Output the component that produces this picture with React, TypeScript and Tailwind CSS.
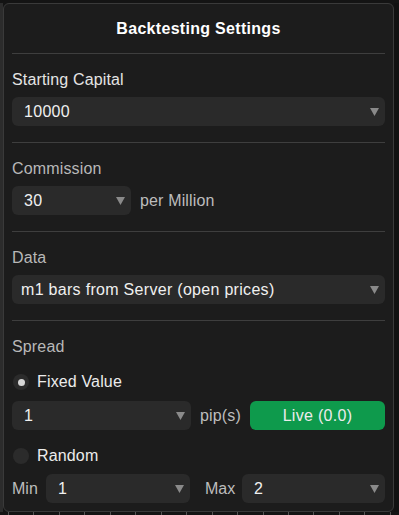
import React from 'react'

const font = { fontFamily: '"Liberation Sans", Arial, sans-serif' }

const Caret: React.FC = () => (
  <svg width="9" height="8" viewBox="0 0 9 8" className="flex-shrink-0">
    <path d="M0 0 L9 0 L4.5 8 Z" fill="#8a8a8a" />
  </svg>
)

const Select: React.FC<{ value: string; className?: string }> = ({ value, className = '' }) => (
  <div className={`h-[29px] flex items-center justify-between pl-3 pr-[6px] bg-[#2a2a2a] rounded-md text-[16px] tracking-[0.3px] text-[#f0f0f0] ${className}`}>
    <span className="truncate">{value}</span>
    <Caret />
  </div>
)

const Divider: React.FC = () => <div className="h-px bg-[#3e3e3e]" />

const Radio: React.FC<{ label: string; checked?: boolean }> = ({ label, checked }) => (
  <div className="h-5 flex items-center gap-[8px] pl-[1px]">
    <div className="w-[16px] h-[16px] rounded-full bg-[#2b2b2b] flex items-center justify-center">
      {checked && <div className="w-[7px] h-[7px] rounded-full bg-[#d6d6d6]" />}
    </div>
    <span className="text-[16px] tracking-[0.15px] text-[#ececec]">{label}</span>
  </div>
)

export default function App() {
  return (
    <div className="w-[399px] h-[515px] bg-[#141414] overflow-hidden flex flex-col" style={font}>
      <div className="flex flex-1 pt-[3px]">
        <div className="w-[3px] bg-[#2c2c2c]" />
        <div className="w-[391px] h-[509px] bg-[#1c1c1c] border border-[#3a3a3a] rounded-md px-2 flex flex-col">
          <div className="h-[49px] flex items-center justify-center text-[16px] tracking-[0.3px] font-bold text-white">
            Backtesting Settings
          </div>
          <Divider />

          <div className="pt-4 pb-4">
            <div className="h-5 flex items-center text-[16px] tracking-[0.15px] text-[#e4e4e4]">Starting Capital</div>
            <Select value="10000" className="mt-[7px]" />
          </div>
          <Divider />

          <div className="pt-4 pb-4">
            <div className="h-5 flex items-center text-[16px] tracking-[0.15px] text-[#b8b8b8]">Commission</div>
            <div className="mt-[7px] flex items-center gap-[9px]">
              <Select value="30" className="w-[119px]" />
              <span className="text-[16px] tracking-[0.15px] text-[#bcbcbc]">per Million</span>
            </div>
          </div>
          <Divider />

          <div className="pt-4 pb-4">
            <div className="h-5 flex items-center text-[16px] tracking-[0.15px] text-[#b8b8b8]">Data</div>
            <Select value="m1 bars from Server (open prices)" className="mt-[7px] pl-[9px]" />
          </div>
          <Divider />

          <div className="pt-4 flex flex-col">
            <div className="h-5 flex items-center text-[16px] tracking-[0.15px] text-[#b8b8b8]">Spread</div>
            <div className="mt-[15px]">
              <Radio label="Fixed Value" checked />
            </div>
            <div className="mt-[9px] flex items-center">
              <Select value="1" className="w-[179px]" />
              <span className="ml-[9px] w-[50px] text-[16px] tracking-[0.15px] text-[#bcbcbc]">pip(s)</span>
              <div className="flex-1 h-[29px] rounded-md bg-[#0e9a4c] flex items-center justify-center text-[16px] tracking-[0.3px] text-[#ececec]">
                Live (0.0)
              </div>
            </div>
            <div className="mt-[16px]">
              <Radio label="Random" />
            </div>
            <div className="mt-[8px] flex items-center">
              <span className="w-[34px] text-[16px] text-[#bcbcbc]">Min</span>
              <Select value="1" className="w-[144px]" />
              <span className="ml-[15px] w-[37px] text-[16px] text-[#bcbcbc]">Max</span>
              <Select value="2" className="flex-1" />
            </div>
          </div>
        </div>
        <div className="flex-1 bg-[#111111]" />
      </div>
      <div className="h-[3px] flex justify-between px-[8px] bg-[#141414]">
        {Array.from({ length: 16 }).map((_, i) => (
          <div key={i} className="w-px h-[3px] bg-[#555555]" />
        ))}
      </div>
    </div>
  )
}
